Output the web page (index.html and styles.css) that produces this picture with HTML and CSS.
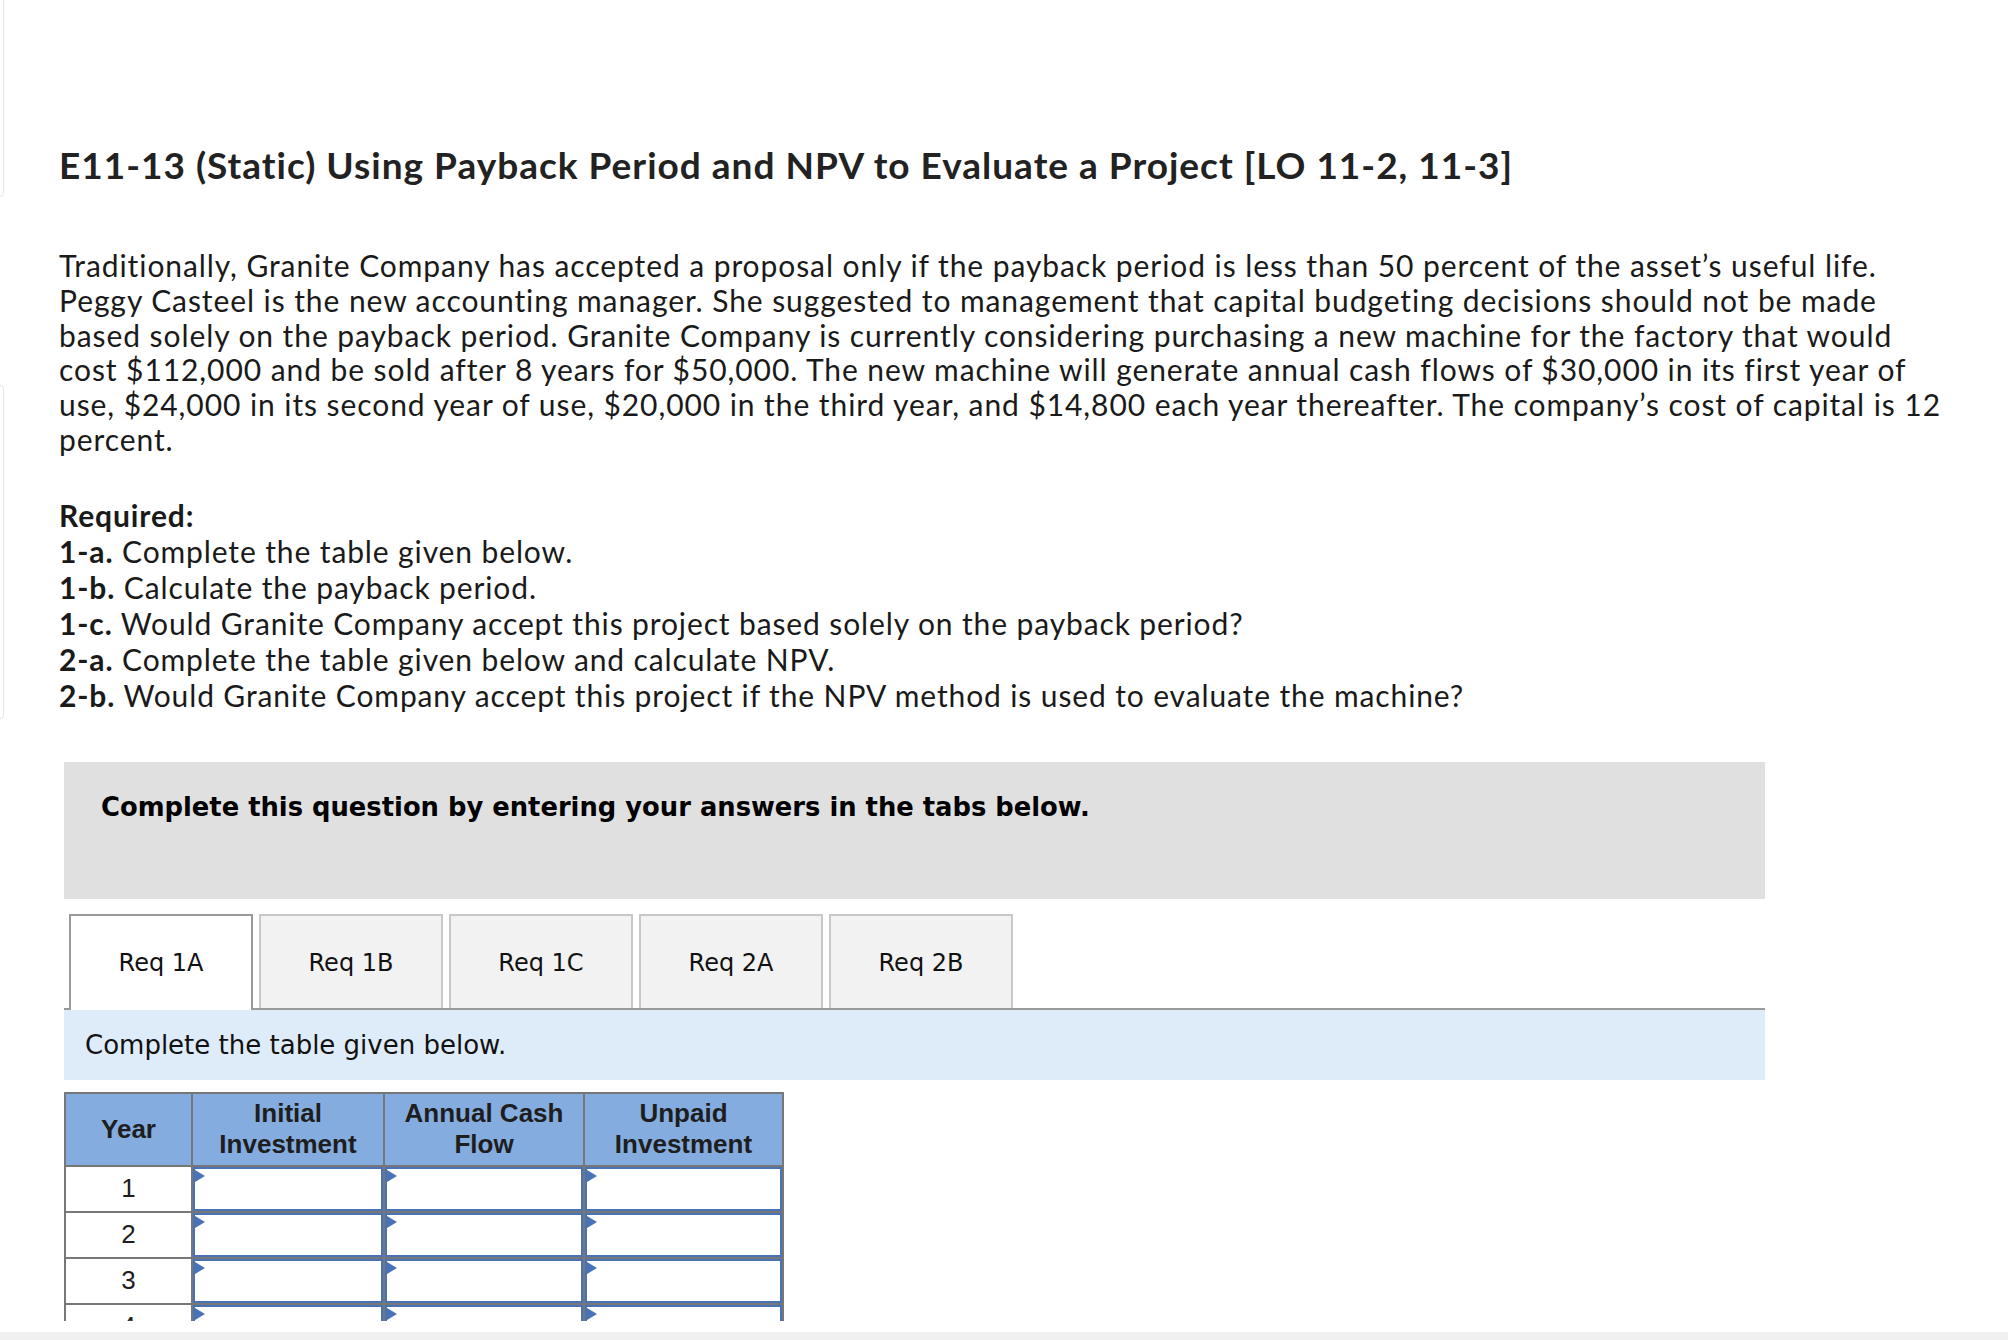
FILE: index.html
```html
<!DOCTYPE html>
<html>
<head>
<meta charset="utf-8">
<title>E11-13 (Static) Using Payback Period and NPV</title>
<link rel="stylesheet" href="styles.css">
</head>
<body>
<div class="edge edge-top"></div>
<div class="edge edge-mid"></div>
<div class="viewport">
  <main class="question">
    <h1 class="title">E11-13 (Static) Using Payback Period and NPV to Evaluate a Project [LO 11-2, 11-3]</h1>
    <p class="prompt">Traditionally, Granite Company has accepted a proposal only if the payback period is less than 50 percent of the asset’s useful life. Peggy Casteel is the new accounting manager. She suggested to management that capital budgeting decisions should not be made based solely on the payback period. Granite Company is currently considering purchasing a new machine for the factory that would cost $112,000 and be sold after 8 years for $50,000. The new machine will generate annual cash flows of $30,000 in its first year of use, $24,000 in its second year of use, $20,000 in the third year, and $14,800 each year thereafter. The company’s cost of capital is 12 percent.</p>
    <div class="required">
      <div class="req-line"><b>Required:</b></div>
      <div class="req-line"><b>1-a.</b> Complete the table given below.</div>
      <div class="req-line"><b>1-b.</b> Calculate the payback period.</div>
      <div class="req-line"><b>1-c.</b> Would Granite Company accept this project based solely on the payback period?</div>
      <div class="req-line"><b>2-a.</b> Complete the table given below and calculate NPV.</div>
      <div class="req-line"><b>2-b.</b> Would Granite Company accept this project if the NPV method is used to evaluate the machine?</div>
    </div>
    <div class="notice">Complete this question by entering your answers in the tabs below.</div>
    <div class="tabs">
      <div class="tab active">Req 1A</div>
      <div class="tab">Req 1B</div>
      <div class="tab">Req 1C</div>
      <div class="tab">Req 2A</div>
      <div class="tab">Req 2B</div>
    </div>
    <div class="instruction">Complete the table given below.</div>
    <table class="grid">
      <thead>
        <tr>
          <th class="c-year">Year</th>
          <th class="c-init">Initial<br>Investment</th>
          <th class="c-flow">Annual Cash<br>Flow</th>
          <th class="c-unpaid">Unpaid<br>Investment</th>
        </tr>
      </thead>
      <tbody>
        <tr><td class="yr">1</td><td class="in"><span class="box"></span></td><td class="in"><span class="box"></span></td><td class="in"><span class="box"></span></td></tr>
        <tr><td class="yr">2</td><td class="in"><span class="box"></span></td><td class="in"><span class="box"></span></td><td class="in"><span class="box"></span></td></tr>
        <tr><td class="yr">3</td><td class="in"><span class="box"></span></td><td class="in"><span class="box"></span></td><td class="in"><span class="box"></span></td></tr>
        <tr><td class="yr">4</td><td class="in"><span class="box"></span></td><td class="in"><span class="box"></span></td><td class="in"><span class="box"></span></td></tr>
        <tr><td class="yr">5</td><td class="in"><span class="box"></span></td><td class="in"><span class="box"></span></td><td class="in"><span class="box"></span></td></tr>
      </tbody>
    </table>
  </main>
</div>
<div class="footer-bar"></div>
</body>
</html>
```

FILE: styles.css
```css
html, body {
  margin: 0;
  padding: 0;
  background: #ffffff;
}
body {
  width: 2008px;
  height: 1340px;
  overflow: hidden;
  position: relative;
  font-family: "Lato", "Liberation Sans", sans-serif;
  color: #1a1a1a;
}
.edge {
  position: absolute;
  left: -6px;
  width: 8px;
  border: 1px solid #e6e6e6;
  border-radius: 4px;
}
.edge-top { top: -10px; height: 205px; }
.edge-mid { top: 385px; height: 332px; }
.viewport {
  height: 1321px;
  overflow: hidden;
}
.question {
  padding: 142px 0 0 59px;
  width: 1888px;
}
.title {
  margin: 0;
  font-size: 37px;
  line-height: 46px;
  letter-spacing: 1px;
  font-weight: 700;
  color: #222;
}
.prompt {
  margin: 60px 0 0 0;
  font-size: 30px;
  line-height: 34.8px;
  letter-spacing: 0.92px;
}
.required {
  margin-top: 40px;
  font-size: 30px;
  line-height: 36px;
  letter-spacing: 0.88px;
}
.req-line b { font-weight: 700; }
.notice {
  margin: 49px 0 0 5px;
  width: 1701px;
  height: 137px;
  box-sizing: border-box;
  padding: 30px 0 0 37px;
  background: #e0e0e0;
  font-family: "DejaVu Sans", Verdana, sans-serif;
  font-weight: 700;
  font-size: 25.8px;
  line-height: 30px;
  color: #000;
}
.tabs {
  margin: 15px 0 0 5px;
  width: 1701px;
  display: flex;
  gap: 6px;
  padding-left: 5px;
  box-sizing: border-box;
  border-bottom: 2px solid #999;
  height: 96px;
}
.tab {
  width: 184px;
  height: 94px;
  box-sizing: border-box;
  border: 2px solid #c8c8c8;
  border-bottom: none;
  background: #f2f2f2;
  display: flex;
  align-items: center;
  justify-content: center;
  padding-top: 2px;
  font-family: "DejaVu Sans", Verdana, sans-serif;
  font-size: 24px;
  color: #111;
}
.tab.active {
  background: #fff;
  border-color: #9a9a9a;
  height: 96px;
  margin-bottom: -2px;
  padding-top: 0;
}
.instruction {
  margin-left: 5px;
  width: 1701px;
  height: 70px;
  box-sizing: border-box;
  padding-left: 21px;
  background: #deebf8;
  display: flex;
  align-items: center;
  font-family: "DejaVu Sans", Verdana, sans-serif;
  font-size: 26px;
  color: #111;
}
.grid {
  margin: 12px 0 0 5px;
  border-collapse: collapse;
  font-family: "Liberation Sans", Arial, sans-serif;
  table-layout: fixed;
}
.grid th, .grid td {
  border: 2px solid #777;
  padding: 0;
}
.grid th {
  background: #84acdf;
  height: 71px;
  font-size: 26px;
  line-height: 31px;
  font-weight: 700;
  color: #1e1e1e;
  text-align: center;
}
.c-year { width: 125px; }
.c-init { width: 190px; }
.c-flow { width: 198px; }
.c-unpaid { width: 197px; }
.grid td {
  height: 44px;
  background: #fff;
}
.yr {
  text-align: center;
  font-size: 26px;
  color: #1e1e1e;
}
.box {
  display: block;
  height: 44px;
  box-sizing: border-box;
  border: 2px solid #4a72b6;
  position: relative;
}
.box::before {
  content: "";
  position: absolute;
  left: 0;
  top: 1px;
  width: 0;
  height: 0;
  border-top: 6px solid transparent;
  border-bottom: 6px solid transparent;
  border-left: 10px solid #4a72b6;
}
.footer-bar {
  position: absolute;
  left: 0;
  right: 0;
  bottom: 0;
  height: 8px;
  background: #f0f0f0;
}
```
